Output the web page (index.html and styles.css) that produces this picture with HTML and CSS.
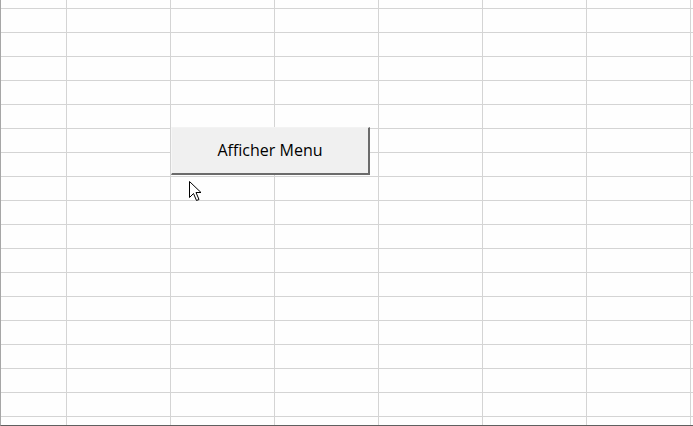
FILE: index.html
```html
<!DOCTYPE html>
<html lang="fr">
<head>
<meta charset="utf-8">
<title>Feuille</title>
<link rel="stylesheet" href="styles.css">
</head>
<body>
<main class="sheet">
  <button class="form-button" type="button">Afficher Menu</button>
  <svg class="cursor" width="14" height="21" viewBox="0 0 14 21" aria-hidden="true">
    <path d="M0.5 0.5 L0.5 16.5 L4.5 12.5 L7.5 19.5 L10 18.5 L7 11.5 L12 11.5 Z" fill="#ffffff" stroke="#000000" stroke-width="1" stroke-linejoin="miter"/>
  </svg>
</main>
</body>
</html>
```
FILE: styles.css
```css
html, body {
  margin: 0;
  padding: 0;
  background: #ffffff;
}
.sheet {
  position: relative;
  width: 693px;
  height: 426px;
  box-sizing: border-box;
  border-left: 1px solid #a6a6a6;
  border-bottom: 1px solid #5f5f5f;
  background-color: #fefefe;
  background-image:
    linear-gradient(to right, #d4d4d4 1px, transparent 1px),
    linear-gradient(to bottom, #d4d4d4 1px, transparent 1px);
  background-size: 104px 100%, 100% 24px;
  background-position: 65px 0, 0 8px;
  overflow: hidden;
}
.form-button {
  position: absolute;
  left: 170px;
  top: 127px;
  width: 199px;
  height: 48px;
  margin: 0;
  padding: 0 0 2px 0;
  box-sizing: border-box;
  background: #f0f0f0;
  border: none;
  border-left: 1px solid #f7f7f7;
  border-top: 1px solid #f3f3f3;
  border-right: 2px solid #6b6b6b;
  border-bottom: 2px solid #6b6b6b;
  font-family: "Open Sans", "Noto Sans", sans-serif;
  font-size: 16px;
  color: #000000;
  cursor: default;
}
.cursor {
  position: absolute;
  left: 188px;
  top: 181px;
}
```
